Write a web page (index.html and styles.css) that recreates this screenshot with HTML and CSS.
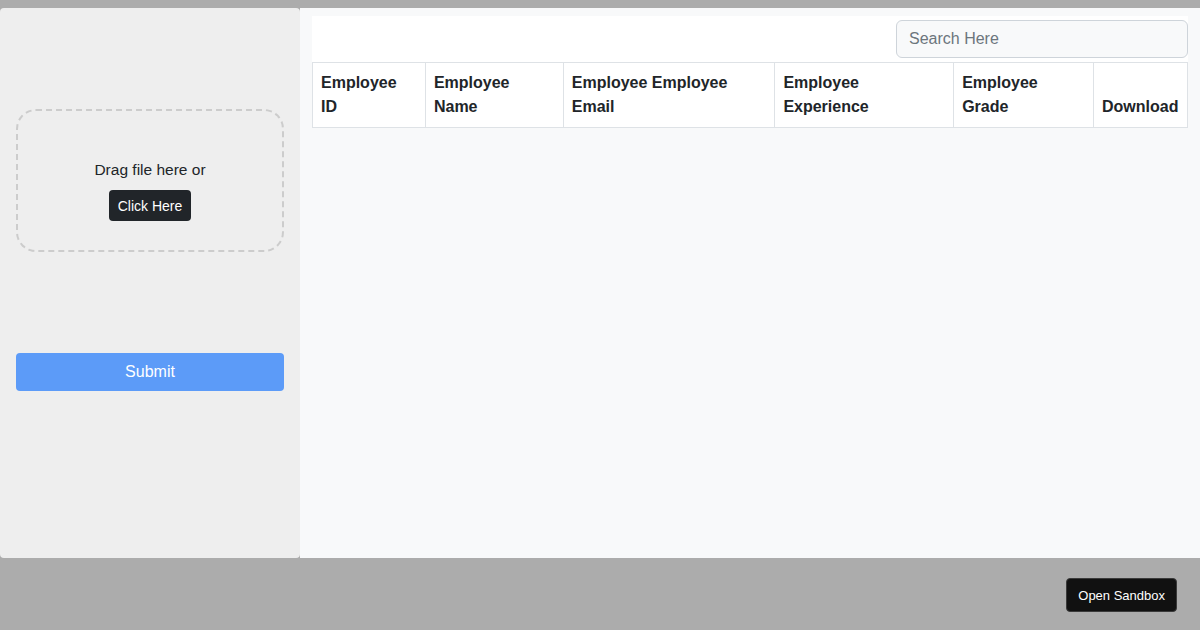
FILE: index.html
```html
<!DOCTYPE html>
<html>
<head>
<meta charset="utf-8">
<link rel="stylesheet" href="styles.css">
</head>
<body>
<div class="app">
  <aside class="side">
    <div class="drop">
      <div class="drop-text">Drag file here or</div>
      <button class="click-btn">Click Here</button>
    </div>
    <button class="submit">Submit</button>
  </aside>
  <main class="content">
    <div class="card">
      <div class="toolbar">
        <input class="search" type="text" placeholder="Search Here">
      </div>
      <table class="tbl">
        <thead>
          <tr>
            <th class="c1">Employee ID</th>
            <th class="c2">Employee Name</th>
            <th class="c3">Employee Employee Email</th>
            <th class="c4">Employee Experience</th>
            <th class="c5">Employee Grade</th>
            <th class="c6">Download</th>
          </tr>
        </thead>
      </table>
    </div>
  </main>
</div>
<div class="footer">
  <button class="sandbox">Open Sandbox</button>
</div>
</body>
</html>
```
FILE: styles.css
```css
* { box-sizing: border-box; }
html, body { margin: 0; padding: 0; }
body {
  background: #acacac;
  font-family: "Liberation Sans", Arial, sans-serif;
  color: #212529;
  width: 1200px;
  height: 630px;
  overflow: hidden;
  padding-top: 8px;
}
.app {
  display: flex;
  height: 550px;
}
.side {
  width: 300px;
  flex: none;
  background: #eeeeee;
  border-radius: 4px;
  padding: 101px 16px 0 16px;
  display: flex;
  flex-direction: column;
}
.drop {
  height: 143px;
  border: 2px dashed #cccccc;
  border-radius: 20px;
  display: flex;
  flex-direction: column;
  align-items: center;
  justify-content: flex-start;
  padding-top: 49px;
}
.drop-text {
  font-size: 15.5px;
  line-height: 20px;
  margin-bottom: 10px;
}
.click-btn {
  background: #212529;
  color: #fff;
  border: none;
  border-radius: 4px;
  font-family: "Liberation Sans", Arial, sans-serif;
  font-size: 14px;
  height: 31px;
  padding: 0 9px;
}
.submit {
  margin-top: 101px;
  height: 38px;
  width: 100%;
  background: #5c9bf8;
  color: #fff;
  border: none;
  border-radius: 4px;
  font-family: "Liberation Sans", Arial, sans-serif;
  font-size: 16px;
}
.content {
  flex: 1;
  background: #f8f9fa;
  padding: 8px 12px;
}
.card {
  background: #fff;
}
.toolbar {
  display: flex;
  justify-content: flex-end;
  padding: 4px 0 4px 0;
}
.search {
  width: 292px;
  height: 38px;
  border: 1px solid #ced4da;
  border-radius: 6px;
  background: #f8f9fa;
  padding: 0 12px;
  font-family: "Liberation Sans", Arial, sans-serif;
  font-size: 16px;
  color: #212529;
  outline: none;
}
.search::placeholder { color: #6c757d; }
.tbl {
  width: 100%;
  border-collapse: collapse;
  background: #f8f9fa;
}
.tbl th {
  border: 1px solid #dee2e6;
  background: #fff;
  text-align: left;
  vertical-align: bottom;
  font-size: 16px;
  line-height: 24px;
  font-weight: bold;
  padding: 8px 8px 8px 8px;
}
.c1 { width: 113px; }
.c2 { width: 138px; }
.c3 { width: 212px; }
.c4 { width: 179px; }
.c5 { width: 140px; }
.c6 { width: 94px; }
.footer {
  display: flex;
  justify-content: flex-end;
  padding: 20px 23px 0 0;
}
.sandbox {
  background: #111111;
  color: #fff;
  border: 1px solid #3a3a3a;
  border-radius: 4px;
  height: 34px;
  padding: 0 11px;
  font-family: "Liberation Sans", Arial, sans-serif;
  font-size: 13px;
}
```
